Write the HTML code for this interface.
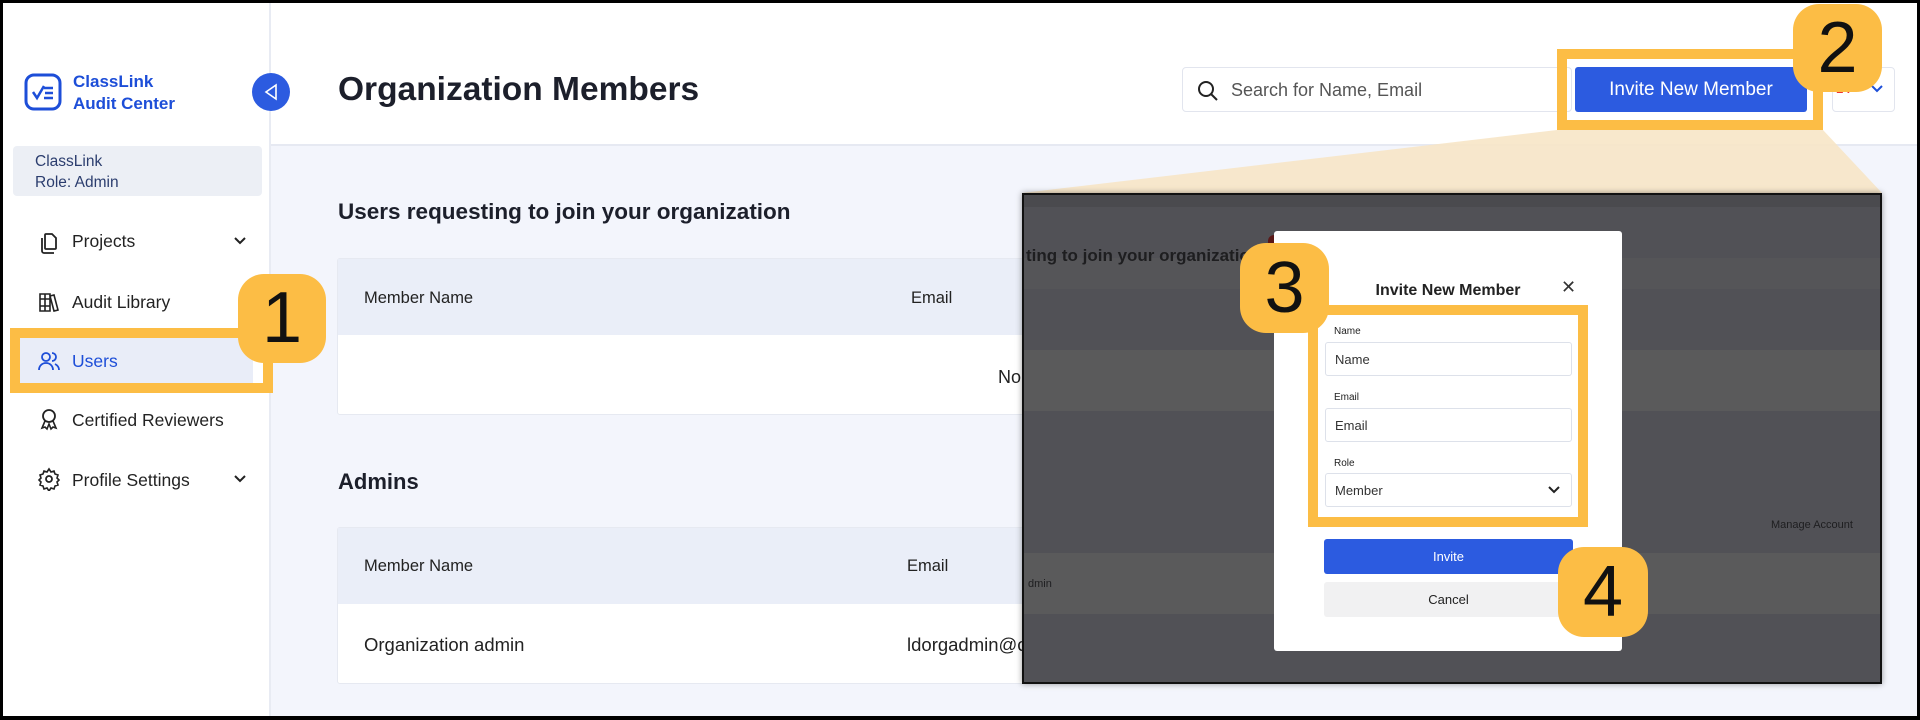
<!DOCTYPE html>
<html><head><meta charset="utf-8"><style>
*{box-sizing:border-box;margin:0;padding:0}
body{width:1920px;height:720px;overflow:hidden;background:#000;font-family:"Liberation Sans",sans-serif}
#f{position:absolute;left:3px;top:3px;width:1914px;height:713px;background:#f3f5fc;overflow:hidden}
.a{position:absolute}
.side{left:0;top:0;width:268px;height:713px;background:#fff;border-right:2px solid #e8ebf3}
.hdr{left:268px;top:0;width:1646px;height:143px;background:#fff;border-bottom:2px solid #e6e9f2}
.nav{position:absolute;left:69px;font-size:17.5px;color:#222;line-height:20px}
.ic{position:absolute;left:34px}
.badge{position:absolute;background:#fcbd45;border-radius:26px;font-size:72px;color:#111;text-align:center;font-family:"Liberation Sans",sans-serif}
.yf{position:absolute;border:10px solid #fcbd45}
.th{font-size:16.5px;color:#222}
</style></head><body><div id="f">
<div class="a side"></div>
<div class="a hdr"></div>
<!-- logo -->
<svg class="a" style="left:21px;top:70px" width="38" height="38" viewBox="0 0 38 38"><rect x="2" y="2" width="34" height="34" rx="8" fill="none" stroke="#1d4ed8" stroke-width="3"/><path d="M9 19l4 6 7-12" fill="none" stroke="#1d4ed8" stroke-width="2.5"/><path d="M20 15h9M21 20h8M20 25h9" stroke="#1d4ed8" stroke-width="2.5"/></svg>
<div class="a" style="left:70px;top:68px;font-size:17px;font-weight:bold;color:#1d4ed8;line-height:22px">ClassLink<br>Audit Center</div>
<div class="a" style="left:249px;top:70px;width:38px;height:38px;border-radius:50%;background:#2c5be0"></div>
<svg class="a" style="left:258px;top:79px" width="20" height="20"><path d="M15 3L5 10l10 7z" fill="none" stroke="#fff" stroke-width="1.6"/></svg>
<div class="a" style="left:10px;top:143px;width:249px;height:50px;background:#eceff5;border-radius:4px;padding:5px 22px;font-size:15.5px;color:#2b3d6e;line-height:21px">ClassLink<br>Role: Admin</div>
<!-- nav -->
<svg class="ic" style="top:228px" width="24" height="24" viewBox="0 0 24 24"><path d="M5 7v13a2 2 0 002 2h10M9 3h6l4 4v10a1 1 0 01-1 1H9a1 1 0 01-1-1V4a1 1 0 011-1z" fill="none" stroke="#222" stroke-width="1.8"/></svg>
<div class="nav" style="top:228px">Projects</div>
<svg class="a" style="left:230px;top:232px" width="14" height="12"><path d="M2 3l5 5 5-5" fill="none" stroke="#222" stroke-width="2"/></svg>
<svg class="ic" style="top:287px" width="24" height="24" viewBox="0 0 24 24"><path d="M3 4h5v17H3zM8 4h5v17H8zM13 6l4-1 4 15-4 1zM3 9h10M3 16h10" fill="none" stroke="#222" stroke-width="1.6"/></svg>
<div class="nav" style="top:289px">Audit Library</div>
<div class="a" style="left:7px;top:325px;width:263px;height:65px;border:10px solid #fcbd45"></div>
<div class="a" style="left:17px;top:335px;width:233px;height:45px;background:#e9edf8"></div>
<svg class="ic" style="top:346px" width="24" height="24" viewBox="0 0 24 24"><circle cx="9" cy="8" r="4" fill="none" stroke="#1d4ed8" stroke-width="1.8"/><path d="M2 21c0-4 3-7 7-7s7 3 7 7M15 4a4 4 0 010 8M18 15c2 1 4 3 4 6" fill="none" stroke="#1d4ed8" stroke-width="1.8"/></svg>
<div class="nav" style="top:348px;color:#1d4ed8">Users</div>
<div class="badge" style="left:235px;top:271px;width:88px;height:89px;line-height:89px">1</div>
<svg class="ic" style="top:404px" width="24" height="24" viewBox="0 0 24 24"><circle cx="12" cy="9" r="6" fill="none" stroke="#222" stroke-width="1.8"/><path d="M8 14l-3 7 3-1 2 2 2-5 2 5 2-2 3 1-3-7" fill="none" stroke="#222" stroke-width="1.6"/></svg>
<div class="nav" style="top:407px">Certified Reviewers</div>
<svg class="ic" style="top:464px" width="24" height="24" viewBox="0 0 24 24"><circle cx="12" cy="12" r="3" fill="none" stroke="#222" stroke-width="1.8"/><path d="M12 2l2 3 3-1 1 3 3 1-1 3 2 2-2 2 1 3-3 1-1 3-3-1-2 3-2-3-3 1-1-3-3-1 1-3-2-2 2-2-1-3 3-1 1-3 3 1z" fill="none" stroke="#222" stroke-width="1.6"/></svg>
<div class="nav" style="top:467px">Profile Settings</div>
<svg class="a" style="left:230px;top:470px" width="14" height="12"><path d="M2 3l5 5 5-5" fill="none" stroke="#222" stroke-width="2"/></svg>
<!-- header -->
<div class="a" style="left:335px;top:68px;font-size:33.5px;font-weight:bold;color:#1c1f2b">Organization Members</div>
<div class="a" style="left:1179px;top:64px;width:390px;height:45px;background:#fff;border:1px solid #e2e5ee;border-radius:4px"></div>
<svg class="a" style="left:1193px;top:76px" width="24" height="24"><circle cx="10" cy="10" r="7" fill="none" stroke="#222" stroke-width="2"/><path d="M15 15l6 6" stroke="#222" stroke-width="2"/></svg>
<div class="a" style="left:1228px;top:77px;font-size:18px;color:#555">Search for Name, Email</div>
<div class="a" style="left:1829px;top:64px;width:63px;height:45px;background:#fff;border:1px solid #e2e5ee;border-radius:4px"></div>
<div class="a" style="left:1833px;top:78px;font-size:13px;color:#e33;font-weight:bold">14</div>
<svg class="a" style="left:1867px;top:80px" width="14" height="12"><path d="M2 3l5 5 5-5" fill="none" stroke="#1d4ed8" stroke-width="2"/></svg>
<div class="yf" style="left:1554px;top:46px;width:266px;height:81px"></div>
<div class="a" style="left:1572px;top:64px;width:232px;height:45px;background:#2c5be0;border-radius:3px;color:#fff;font-size:19px;text-align:center;line-height:45px">Invite New Member</div>
<div class="badge" style="left:1790px;top:1px;width:89px;height:88px;line-height:88px">2</div>
<!-- content -->
<div class="a" style="left:335px;top:196px;font-size:22.5px;font-weight:bold;color:#1c1f2b">Users requesting to join your organization</div>
<div class="a" style="left:334px;top:255px;width:1300px;height:157px;background:#fff;border:1px solid #e6e9f1;border-radius:3px"></div>
<div class="a" style="left:335px;top:256px;width:1300px;height:76px;background:#eaeef8"></div>
<div class="a th" style="left:361px;top:286px">Member Name</div>
<div class="a th" style="left:908px;top:286px">Email</div>
<div class="a" style="left:995px;top:364px;font-size:18px;color:#222">No</div>
<div class="a" style="left:335px;top:466px;font-size:22px;font-weight:bold;color:#1c1f2b">Admins</div>
<div class="a" style="left:334px;top:524px;width:1300px;height:157px;background:#fff;border:1px solid #e6e9f1;border-radius:3px"></div>
<div class="a" style="left:335px;top:525px;width:1300px;height:76px;background:#eaeef8"></div>
<div class="a th" style="left:361px;top:554px">Member Name</div>
<div class="a th" style="left:904px;top:554px">Email</div>
<div class="a" style="left:361px;top:631px;font-size:18.5px;color:#222">Organization admin</div>
<div class="a" style="left:904px;top:631px;font-size:18.5px;color:#222">ldorgadmin@c</div>
<!-- cone -->
<svg class="a" style="left:0;top:0" width="1914" height="713"><polygon points="1554,127 1820,127 1879,190 1019,190" fill="#f7e6c6" opacity="0.9"/></svg>
<!-- inset -->
<div class="a" style="left:1019px;top:190px;width:860px;height:491px;background:#515156;border:2px solid #111;box-shadow:0 0 6px rgba(0,0,0,.4);overflow:hidden">
 <div class="a" style="left:0;top:0;width:860px;height:12px;background:#4a4a4e"></div>
 <div class="a" style="left:0;top:63px;width:860px;height:31px;background:#555558"></div>
 <div class="a" style="left:0;top:155px;width:860px;height:61px;background:#5a5a5b"></div>
 <div class="a" style="left:0;top:358px;width:860px;height:61px;background:#5a5a5b"></div>
 <div class="a" style="left:2px;top:51px;font-size:17px;font-weight:bold;color:#1e1e20">ting to join your organizatio</div>
 <div class="a" style="left:747px;top:324px;font-size:11px;color:#1e1e20">Manage Account</div>
 <div class="a" style="left:4px;top:383px;font-size:11px;color:#1e1e20">dmin</div>
 <div class="a" style="left:244px;top:40px;width:10px;height:14px;background:#5a1818;border-radius:6px 0 0 0"></div>
</div>
<!-- modal -->
<div class="a" style="left:1271px;top:228px;width:348px;height:420px;background:#fff;border-radius:3px"></div>
<div class="a" style="left:1271px;top:279px;width:348px;text-align:center;font-size:16px;font-weight:bold;color:#222">Invite New Member</div>
<div class="a" style="left:1558px;top:274px;font-size:18px;color:#333">✕</div>
<div class="yf" style="left:1305px;top:302px;width:280px;height:222px"></div>
<div class="a" style="left:1331px;top:323px;font-size:10px;color:#222">Name</div>
<div class="a" style="left:1322px;top:339px;width:247px;height:34px;border:1px solid #dde1ea;border-radius:3px;font-size:13px;color:#333;padding:9px 9px">Name</div>
<div class="a" style="left:1331px;top:389px;font-size:10px;color:#222">Email</div>
<div class="a" style="left:1322px;top:405px;width:247px;height:34px;border:1px solid #dde1ea;border-radius:3px;font-size:13px;color:#333;padding:9px 9px">Email</div>
<div class="a" style="left:1331px;top:455px;font-size:10px;color:#222">Role</div>
<div class="a" style="left:1322px;top:470px;width:247px;height:34px;border:1px solid #dde1ea;border-radius:3px;font-size:13px;color:#333;padding:9px 9px">Member</div>
<svg class="a" style="left:1545px;top:482px" width="12" height="10"><path d="M1 2l5 5 5-5" fill="none" stroke="#222" stroke-width="2"/></svg>
<div class="a" style="left:1321px;top:536px;width:249px;height:35px;background:#2c5be0;border-radius:3px;color:#fff;font-size:13px;text-align:center;line-height:35px">Invite</div>
<div class="a" style="left:1321px;top:579px;width:249px;height:35px;background:#f1f1f2;border-radius:3px;color:#222;font-size:13px;text-align:center;line-height:35px">Cancel</div>
<div class="badge" style="left:1237px;top:240px;width:89px;height:90px;line-height:90px">3</div>
<div class="badge" style="left:1555px;top:544px;width:90px;height:90px;line-height:90px">4</div>
</div></body></html>
